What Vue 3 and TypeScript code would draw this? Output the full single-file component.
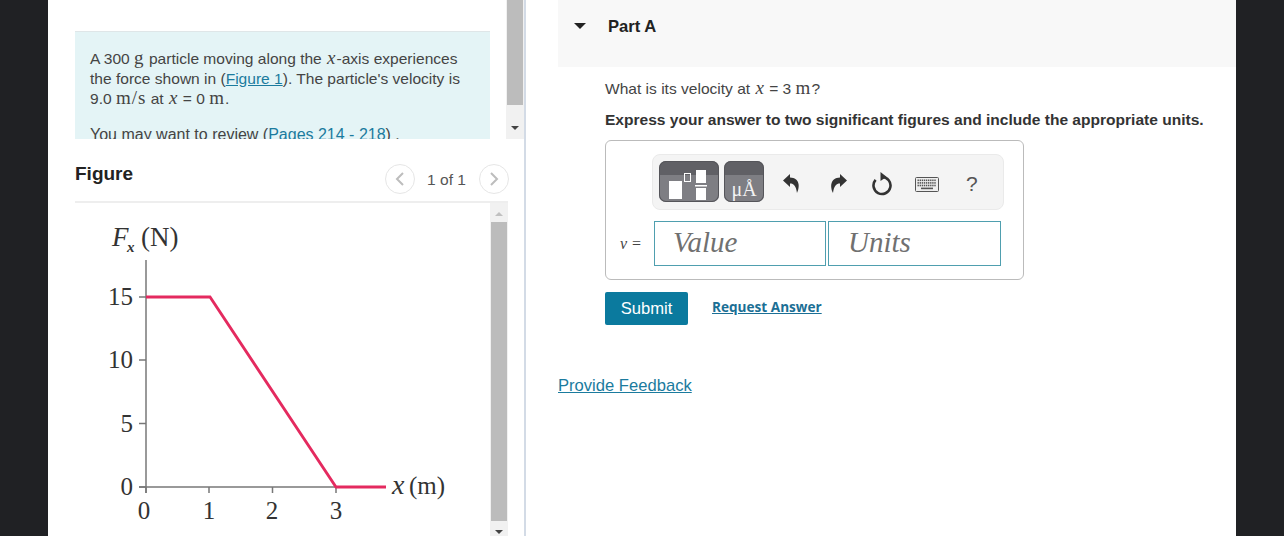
<script setup lang="ts">
interface AxisTick {
  label: string;
  pos: number;
  labelPos: number;
}

const xTicks: AxisTick[] = [
  { label: "0", pos: 146, labelPos: 144 },
  { label: "1", pos: 209, labelPos: 209 },
  { label: "2", pos: 272.5, labelPos: 272 },
  { label: "3", pos: 336, labelPos: 336 },
];

const yTicks: AxisTick[] = [
  { label: "15", pos: 87, labelPos: 95 },
  { label: "10", pos: 150, labelPos: 158 },
  { label: "5", pos: 213.5, labelPos: 221.5 },
  { label: "0", pos: 277, labelPos: 285 },
];

const keyRows = [0, 1, 2];
const keyCols = [0, 1, 2, 3, 4, 5, 6, 7, 8];
</script>

<template>
  <div class="page">
    <div class="side"></div>
    <main class="sheet">
      <section class="left">
        <div class="intro-pane">
          <div class="intro">
            <p>
              A 300 <span class="math">g</span> particle moving along the <i class="math var-x">x</i>-axis experiences
              the force shown in (<a class="link">Figure 1</a>). The particle's velocity is
              9.0 <span class="math">m/s</span> at <i class="math var-x">x</i> = 0 <span class="math">m</span>.
            </p>
            <p class="review">You may want to review (<span class="plain-link">Pages 214 - 218</span>) .</p>
          </div>
          <div class="scroll scroll-top">
            <div class="thumb-top"></div>
            <span class="arrow-down small"></span>
          </div>
        </div>

        <div class="figure">
          <header class="figure-head">
            <h2>Figure</h2>
            <div class="pager">
              <span class="round">
                <svg width="10" height="14" viewBox="0 0 10 14"><path d="M8 1 L2 7 L8 13" /></svg>
              </span>
              <span class="count">1 of 1</span>
              <span class="round">
                <svg width="10" height="14" viewBox="0 0 10 14"><path d="M2 1 L8 7 L2 13" /></svg>
              </span>
            </div>
          </header>
          <div class="figure-body">
            <svg class="graph" width="415" height="333" viewBox="75 -7 415 333">
              <g class="graph-text">
                <text x="112" y="36" font-style="italic" font-size="27">F</text>
                <text x="127" y="42" font-style="italic" font-weight="bold" font-size="15">x</text>
                <text x="141" y="36" font-size="27">(N)</text>
                <text x="392" y="284" font-style="italic" font-size="28">x</text>
                <text x="409" y="284" font-size="25">(m)</text>
                <text v-for="t in yTicks" :key="'y' + t.label" x="133" :y="t.labelPos" text-anchor="end" font-size="25">{{ t.label }}</text>
                <text v-for="t in xTicks" :key="'x' + t.label" :x="t.labelPos" y="309" text-anchor="middle" font-size="25">{{ t.label }}</text>
              </g>
              <g class="axis">
                <line x1="146" y1="50" x2="146" y2="283" />
                <line x1="139" y1="277" x2="336" y2="277" />
                <line v-for="t in yTicks" :key="'yt' + t.label" x1="139" :y1="t.pos" x2="146" :y2="t.pos" />
                <line v-for="t in xTicks" :key="'xt' + t.label" :x1="t.pos" y1="277" :x2="t.pos" y2="283" />
              </g>
              <polyline class="curve" points="146,87 210,87 336,277 386,277" />
            </svg>
            <div class="scroll scroll-fig">
              <span class="arrow-up small"></span>
              <div class="thumb-fig"></div>
              <span class="arrow-down small"></span>
            </div>
          </div>
        </div>
      </section>

      <section class="right">
        <header class="part-head">
          <span class="arrow-down part-arrow"></span>
          <h3>Part A</h3>
        </header>
        <div class="part-body">
          <p class="question">What is its velocity at <i class="math var-x">x</i> = 3 <span class="math">m</span>?</p>
          <p class="instruction">Express your answer to two significant figures and include the appropriate units.</p>

          <div class="answer">
            <div class="toolbar">
              <button type="button" class="tool-btn tool-template">
                <svg width="60" height="41" viewBox="0 0 60 41">
                  <rect x="10" y="20" width="13" height="18" fill="#fff" />
                  <rect x="25.5" y="12.5" width="6" height="8" fill="none" stroke="#fff" />
                  <rect x="37" y="9" width="10" height="13" fill="#fff" />
                  <rect x="36" y="24" width="12" height="1.5" fill="#fff" />
                  <rect x="37" y="27" width="10" height="12" fill="#fff" />
                </svg>
              </button>
              <button type="button" class="tool-btn tool-units"><span class="mu">μÅ</span></button>
              <div class="tool-icons">
                <svg width="18" height="20" viewBox="0 0 18 20"><path class="dark" d="M7 0 L0 6.5 L7 13 V9.5 C11 9.5 13 12 14 19 C17 13 17 4 7 3.5 Z" /></svg>
                <svg class="ic-redo" width="18" height="20" viewBox="0 0 18 20"><path class="dark" d="M11 0 L18 6.5 L11 13 V9.5 C7 9.5 5 12 4 19 C1 13 1 4 11 3.5 Z" /></svg>
                <svg class="ic-reset" width="22" height="24" viewBox="0 0 22 24">
                  <path d="M11 5 A8.5 8.5 0 1 1 4.6 7.9" fill="none" stroke="#333" stroke-width="2.6" />
                  <path class="dark" d="M9.5 0 L15.5 4.8 L9.5 9 Z" />
                </svg>
                <svg class="ic-keys" width="24" height="15" viewBox="0 0 24 15">
                  <rect x="0.5" y="0.5" width="23" height="14" rx="1" fill="#eee" stroke="#555" />
                  <g v-for="r in keyRows" :key="r">
                    <rect v-for="c in keyCols" :key="c" :x="2.5 + c * 2.1" :y="2.5 + r * 2.6" width="1.4" height="1.6" fill="#555" />
                  </g>
                  <rect x="6" y="10.6" width="12" height="1.6" fill="#555" />
                </svg>
                <span class="help">?</span>
              </div>
            </div>
            <div class="inputs">
              <span class="var"><i>v</i> =</span>
              <div class="field field-value">Value</div>
              <div class="field field-units">Units</div>
            </div>
          </div>

          <div class="actions">
            <button type="button" class="submit">Submit</button>
            <a class="request">Request Answer</a>
          </div>
        </div>
        <a class="feedback">Provide Feedback</a>
      </section>
    </main>
    <div class="side"></div>
  </div>
</template>

<style scoped>
.page {
  display: flex;
  height: 536px;
  overflow: hidden;
  font-family: "Liberation Sans", Arial, sans-serif;
  font-size: 15.55px;
  color: #444;
}

.side {
  width: 48px;
  flex: none;
  background: #202124;
}

.sheet {
  flex: 1;
  display: flex;
  background: #fff;
}

.left {
  width: 478px;
  flex: none;
  border-right: 2px solid #d3dbe6;
  box-sizing: border-box;
}

.intro-pane {
  height: 139px;
  display: flex;
  align-items: flex-start;
  overflow: hidden;
  padding-left: 27px;
}

.intro {
  width: 415px;
  height: 200px;
  flex: none;
  margin-top: 31px;
  box-sizing: border-box;
  padding: 16px 15px;
  background: #e4f4f6;
  border-top: 1px solid #dfe6e8;
  line-height: 19.5px;
}

.intro p {
  margin: 0;
}

.intro .review {
  margin-top: 16px;
  font-size: 16px;
}

.math {
  font-family: "Liberation Serif", "Times New Roman", serif;
  font-size: 19px;
  letter-spacing: 1px;
  line-height: 1;
}

.var-x {
  padding-left: 1px;
}

.link,
.feedback {
  color: #1b7b9e;
  text-decoration: underline;
}

.plain-link {
  color: #1b7b9e;
}

.scroll {
  background: #f1f1f1;
  display: flex;
  flex-direction: column;
  align-items: center;
}

.scroll-top {
  width: 18px;
  height: 139px;
  margin-left: 16px;
  flex: none;
}

.thumb-top {
  width: 16px;
  height: 105px;
  background: #bcbcbc;
  margin-bottom: 21px;
}

.arrow-down,
.arrow-up {
  display: block;
  width: 0;
  height: 0;
  border-left: 6px solid transparent;
  border-right: 6px solid transparent;
}

.arrow-down {
  border-top: 6px solid #222;
}

.arrow-up {
  border-bottom: 6px solid #c0c0c0;
}

.arrow-down.small,
.arrow-up.small {
  border-left-width: 4px;
  border-right-width: 4px;
  border-top-width: 4px;
  border-bottom-width: 4px;
}

.arrow-down.small {
  border-bottom: 0;
  border-top-color: #444;
}

.arrow-up.small {
  border-top: 0;
}

.figure {
  padding-left: 27px;
}

.figure-head {
  width: 433px;
  height: 64px;
  display: flex;
  justify-content: space-between;
  align-items: center;
  padding: 19px 0 2px;
  box-sizing: border-box;
  border-bottom: 2px solid #eeeeee;
}

.figure-head h2 {
  margin: 0 0 10px;
  font-size: 19px;
  color: #222;
  font-weight: bold;
}

.pager {
  display: flex;
  align-items: center;
  margin-right: -1px;
}

.count {
  margin: 0 13px 0 12px;
  color: #555;
  padding-top: 2px;
}

.round {
  width: 30px;
  height: 30px;
  box-sizing: border-box;
  border: 1px solid #e6e6e6;
  border-radius: 50%;
  display: flex;
  align-items: center;
  justify-content: center;
}

.round path {
  fill: none;
  stroke: #bdbdbd;
  stroke-width: 2;
}

.figure-body {
  display: flex;
  height: 333px;
}

.graph {
  flex: none;
}

.graph-text text {
  font-family: "Liberation Serif", "Times New Roman", serif;
  fill: #333;
}

.axis line {
  stroke: #777;
  stroke-width: 1.5;
}

.curve {
  fill: none;
  stroke: #e42a5f;
  stroke-width: 2.8;
}

.scroll-fig {
  width: 18px;
  height: 333px;
  padding-top: 9px;
  box-sizing: border-box;
}

.thumb-fig {
  width: 16px;
  height: 299px;
  margin: 6px 0 9px;
  background: #bcbcbc;
}

.right {
  flex: 1;
  padding-left: 32px;
  min-width: 0;
}

.part-head {
  height: 67px;
  display: flex;
  align-items: flex-start;
  background: #f8f8f8;
}

.part-arrow {
  margin: 23px 0 0 16px;
}

.part-head h3 {
  margin: 18px 0 0 22px;
  font-size: 16.6px;
  line-height: 18px;
  font-weight: bold;
  color: #222;
}

.part-body {
  padding-left: 47px;
}

.question {
  margin: 11px 0 0;
  line-height: 20px;
}

.instruction {
  margin: 11px 0 0;
  line-height: 20px;
  font-weight: bold;
  color: #333;
}

.answer {
  width: 419px;
  height: 140px;
  margin-top: 10px;
  box-sizing: border-box;
  border: 1px solid #bbb;
  border-radius: 6px;
  padding: 13px 0 0 46px;
}

.toolbar {
  width: 352px;
  height: 56px;
  box-sizing: border-box;
  display: flex;
  align-items: flex-start;
  gap: 5px;
  padding: 6px 0 0 6px;
  background: #f4f4f4;
  border: 1px solid #eaeaea;
  border-radius: 8px;
}

.tool-btn {
  height: 41px;
  padding: 0;
  border: 0;
  border-radius: 7px;
  background: linear-gradient(#606065 0, #606065 14px, #7e7e83 14px, #7e7e83 100%);
  box-shadow: inset 0 0 0 1px #55555a;
  overflow: hidden;
}

.tool-template {
  width: 60px;
}

.tool-template svg {
  display: block;
}

.tool-units {
  width: 40px;
  display: flex;
  align-items: flex-end;
  justify-content: center;
}

.mu {
  font-family: "Liberation Serif", serif;
  font-size: 20px;
  line-height: 25px;
  color: #f2f2f2;
}

.tool-icons {
  display: flex;
  align-items: center;
  height: 46px;
  margin-left: 14px;
}

.ic-redo {
  margin-left: 28px;
}

.ic-reset {
  margin-left: 24px;
}

.ic-keys {
  margin-left: 22px;
}

.dark {
  fill: #333;
}

.help {
  margin-left: 27px;
  font-size: 21px;
  color: #555;
}

.inputs {
  display: flex;
  align-items: center;
  gap: 2px;
  margin-top: 11px;
  margin-left: -32px;
}

.var {
  width: 32px;
  font-family: "Liberation Serif", serif;
  font-size: 16px;
  letter-spacing: 0.5px;
  color: #444;
}

.field {
  height: 45px;
  box-sizing: border-box;
  border: 1px solid #4f9faf;
  font-family: "Liberation Serif", serif;
  font-style: italic;
  font-size: 29px;
  line-height: 41px;
  color: #707070;
}

.field-value {
  width: 172px;
  padding-left: 18px;
}

.field-units {
  width: 173px;
  padding-left: 19px;
}

.actions {
  display: flex;
  align-items: center;
  margin-top: 12px;
}

.submit {
  width: 83px;
  height: 33px;
  padding: 0;
  border: 0;
  border-radius: 2px;
  background: #0b7a9e;
  color: #fff;
  font-family: "Liberation Sans", Arial, sans-serif;
  font-size: 16.6px;
}

.request {
  margin: 0 0 5px 24px;
  font-family: "Open Sans", sans-serif;
  font-size: 13.6px;
  font-weight: 700;
  color: #1b6f95;
  text-decoration: underline;
}

.feedback {
  display: inline-block;
  margin-top: 51px;
  font-size: 16.6px;
  line-height: 20px;
}
</style>

<style>
html,
body {
  margin: 0;
  background: #202124;
}
</style>
